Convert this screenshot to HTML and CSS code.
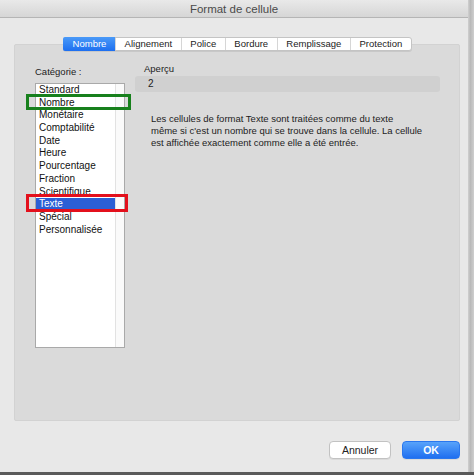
FILE: index.html
```html
<!DOCTYPE html>
<html lang="fr">
<head>
<meta charset="utf-8">
<title>Format de cellule</title>
<link rel="stylesheet" href="styles.css">
</head>
<body>
<div class="screen">
  <div class="window">
    <div class="titlebar">Format de cellule</div>
    <div class="content">
      <div class="tabs">
        <span class="tab active">Nombre</span>
        <span class="tab">Alignement</span>
        <span class="tab">Police</span>
        <span class="tab">Bordure</span>
        <span class="tab">Remplissage</span>
        <span class="tab">Protection</span>
      </div>
      <div class="panel">
        <div class="col-left">
          <div class="label">Catégorie :</div>
          <div class="listbox">
            <ul class="items">
              <li>Standard</li>
              <li>Nombre</li>
              <li>Monétaire</li>
              <li>Comptabilité</li>
              <li>Date</li>
              <li>Heure</li>
              <li>Pourcentage</li>
              <li>Fraction</li>
              <li>Scientifique</li>
              <li class="selected">Texte</li>
              <li>Spécial</li>
              <li>Personnalisée</li>
            </ul>
            <div class="scrolltrack"></div>
          </div>
        </div>
        <div class="col-right">
          <div class="label preview-label">Aperçu</div>
          <div class="preview">2</div>
          <p class="desc">Les cellules de format Texte sont traitées comme du texte<br>même si c'est un nombre qui se trouve dans la cellule. La cellule<br>est affichée exactement comme elle a été entrée.</p>
        </div>
        <div class="mark mark-green"></div>
        <div class="mark mark-red"></div>
      </div>
      <div class="buttons">
        <button class="btn">Annuler</button>
        <button class="btn primary">OK</button>
      </div>
    </div>
  </div>
  <div class="edge"></div>
</div>
<div class="bottombar"></div>
</body>
</html>
```
FILE: styles.css
```css
* { box-sizing: border-box; }
html, body { margin: 0; padding: 0; }
body {
  width: 474px;
  height: 475px;
  overflow: hidden;
  background: #e8e8e8;
  font-family: "Liberation Sans", Arial, sans-serif;
  color: #1c1c1c;
}
.screen {
  display: flex;
  height: 472px;
}
.window {
  width: 468px;
  height: 472px;
  display: flex;
  flex-direction: column;
  background: #e8e8e8;
}
.edge {
  flex: 1;
  background: linear-gradient(to right, #d0d0d0, #b9b9b9 40%, #cfcfcf);
}
.bottombar {
  height: 3px;
  background: #5a5a5a;
}
.titlebar {
  height: 18px;
  line-height: 18px;
  text-align: center;
  font-size: 11.5px;
  color: #4a4a4a;
  background: linear-gradient(#e9e9e9, #d6d6d6);
  border-bottom: 1px solid #b5b5b5;
}
.content {
  flex: 1;
  padding: 19px 8px 0 14px;
  display: flex;
  flex-direction: column;
}
.tabs {
  align-self: flex-start;
  margin-left: 49px;
  display: flex;
  height: 14px;
  margin-bottom: -7px;
  position: relative;
  z-index: 1;
  background: #fff;
  border: 1px solid #c4c4c4;
  border-radius: 3px;
  box-shadow: 0 1px 0 rgba(0,0,0,0.08);
}
.tab {
  font-size: 9.5px;
  line-height: 12px;
  padding: 0 8.6px;
  color: #222;
  border-left: 1px solid #d6d6d6;
}
.tab:first-child { border-left: 0; }
.tab.active {
  background: linear-gradient(#4a9af8, #1d6ff0);
  color: #fff;
  border-radius: 2px 0 0 2px;
  margin: -1px 0 -1px -1px;
  line-height: 14px;
  padding: 0 8.6px 0 9.6px;
}
.panel {
  position: relative;
  width: 446px;
  height: 377px;
  background: #dadada;
  border: 1px solid #d2d2d2;
  border-radius: 2px;
  display: flex;
  padding: 21px 0 0 20px;
  gap: 10px;
}
.label {
  font-size: 9.5px;
  line-height: 12px;
  color: #1c1c1c;
}
.col-left {
  width: 90px;
  display: flex;
  flex-direction: column;
}
.listbox {
  margin-top: 5px;
  height: 265px;
  background: #fff;
  border: 1px solid #a9a9a9;
  display: flex;
}
.items {
  list-style: none;
  margin: 0;
  padding: 0;
  flex: 1;
}
.items li {
  font-size: 10px;
  height: 12.7px;
  line-height: 12.7px;
  padding-left: 3px;
  color: #111;
  white-space: nowrap;
}
.items li.selected {
  background: #2b5fd5;
  color: #fff;
}
.scrolltrack {
  width: 9px;
  background: #fafafa;
  border-left: 1px solid #e2e2e2;
}
.col-right {
  width: 305px;
  display: flex;
  flex-direction: column;
}
.preview-label {
  padding-left: 9px;
  margin-top: -3px;
}
.preview {
  margin-top: 1px;
  height: 16px;
  line-height: 16px;
  background: #d0d0d0;
  border-radius: 3px;
  font-size: 10px;
  padding-left: 13px;
  color: #1c1c1c;
}
.desc {
  margin: 21px 0 0 16px;
  font-size: 9.5px;
  line-height: 12.2px;
  color: #1c1c1c;
}
.mark {
  position: absolute;
  border: 3px solid;
}
.mark-green {
  border-color: #17801c;
  left: 11px;
  top: 49px;
  width: 105px;
  height: 16px;
}
.mark-red {
  border-color: #e3101c;
  left: 11px;
  top: 149px;
  width: 102px;
  height: 18px;
}
.buttons {
  display: flex;
  justify-content: flex-end;
  gap: 11px;
  margin-top: 20px;
  width: 446px;
}
.btn {
  font-family: "Liberation Sans", Arial, sans-serif;
  font-size: 10.5px;
  height: 18px;
  padding: 0;
  border-radius: 4px;
  border: 1px solid #c2c2c2;
  background: #fff;
  color: #222;
  width: 62px;
  box-shadow: 0 1px 0 rgba(0,0,0,0.06);
}
.btn.primary {
  width: 58px;
  color: #fff;
  font-weight: bold;
  border-color: #2a77ee;
  background: linear-gradient(#58a3fa, #1f6ff0);
}
```
